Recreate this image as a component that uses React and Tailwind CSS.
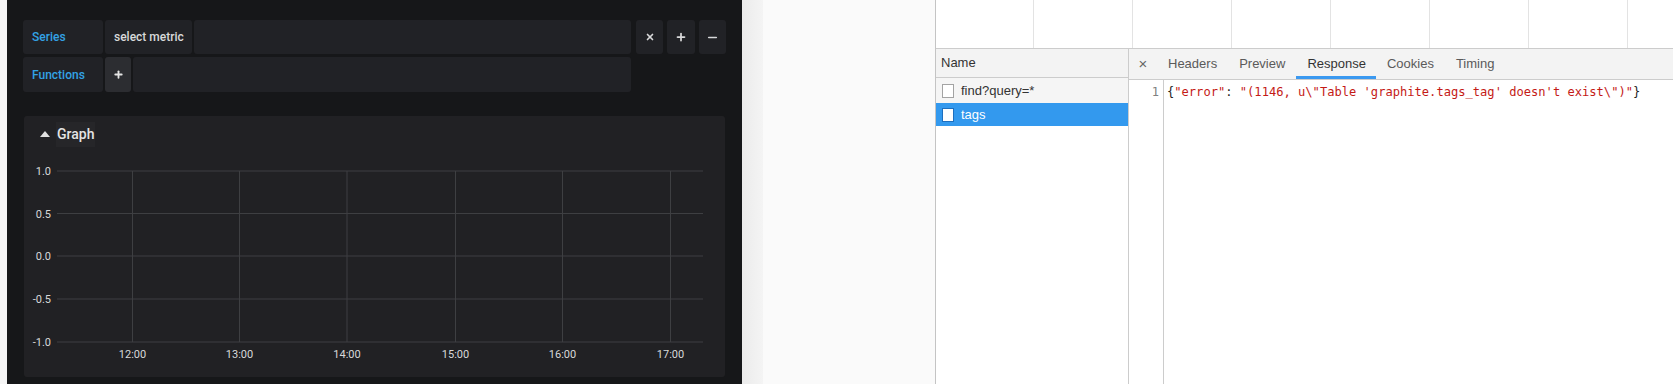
import React from 'react'
import { X, Plus, Minus } from 'lucide-react'

const yTicks = [
  { label: '1.0', y: 19 },
  { label: '0.5', y: 61.5 },
  { label: '0.0', y: 104 },
  { label: '-0.5', y: 147 },
  { label: '-1.0', y: 190 },
]

const xTicks = [
  { label: '12:00', x: 108.5 },
  { label: '13:00', x: 215.5 },
  { label: '14:00', x: 323 },
  { label: '15:00', x: 431.5 },
  { label: '16:00', x: 538.5 },
  { label: '17:00', x: 646.5 },
]

const GraphChart = () => (
  <svg width="701" height="225" className="block">
    {yTicks.map((t) => (
      <g key={t.label}>
        <line x1="33" x2="679" y1={t.y} y2={t.y} stroke="#3e3f42" strokeWidth="1" />
        <text x="27" y={t.y + 4} textAnchor="end" fontSize="11" fill="#d8d9da" fontFamily="Roboto, sans-serif">
          {t.label}
        </text>
      </g>
    ))}
    {xTicks.map((t) => (
      <g key={t.label}>
        <line x1={t.x} x2={t.x} y1="19" y2="190" stroke="#3e3f42" strokeWidth="1" />
        <text x={t.x} y="206" textAnchor="middle" fontSize="11" fill="#d8d9da" fontFamily="Roboto, sans-serif">
          {t.label}
        </text>
      </g>
    ))}
  </svg>
)

const FileIcon = ({ selected }) => (
  <span
    className={`inline-block w-[12px] h-[14px] border ${selected ? 'bg-white border-[#1d6fbf]' : 'bg-white border-[#a3a3a3]'}`}
  />
)

const Grafana = () => (
  <div className="w-[735px] h-full bg-[#161719] pt-[20px] pl-[16px] font-['Roboto',sans-serif]">
    {/* Query rows */}
    <div className="flex flex-col gap-[3px]">
      <div className="flex h-[34px]">
        <div className="w-[80px] bg-[#212226] rounded-[3px] flex items-center pl-[9px] text-[12px] font-medium text-[#33a2e5]">
          Series
        </div>
        <div className="ml-[2px] w-[87px] bg-[#212226] rounded-[3px] flex items-center pl-[9px] text-[12px] font-medium text-[#d8d9da]">
          select metric
        </div>
        <div className="ml-[2px] w-[437px] bg-[#212226] rounded-[3px]" />
        <div className="ml-[5px] w-[27px] bg-[#212226] rounded-[3px] flex items-center justify-center text-[#d8d9da]">
          <X size={10} strokeWidth={4} />
        </div>
        <div className="ml-[4px] w-[28px] bg-[#212226] rounded-[3px] flex items-center justify-center text-[#d8d9da]">
          <Plus size={12} strokeWidth={3.5} />
        </div>
        <div className="ml-[4px] w-[27px] bg-[#212226] rounded-[3px] flex items-center justify-center text-[#d8d9da]">
          <Minus size={13} strokeWidth={3} />
        </div>
      </div>
      <div className="flex h-[35px]">
        <div className="w-[80px] bg-[#212226] rounded-[3px] flex items-center pl-[9px] text-[12px] font-medium text-[#33a2e5]">
          Functions
        </div>
        <div className="ml-[2px] w-[26px] bg-[#2c2d31] rounded-[3px] flex items-center justify-center text-[#e4e4e4]">
          <Plus size={11} strokeWidth={4} />
        </div>
        <div className="ml-[2px] w-[498px] bg-[#212226] rounded-[3px]" />
      </div>
    </div>

    {/* Graph panel */}
    <div className="mt-[24px] ml-[1px] w-[701px] h-[261px] bg-[#212124] rounded-[3px]">
      <div className="h-[36px] flex items-center pl-[16px]">
        <span className="w-0 h-0 border-l-[5.5px] border-r-[5.5px] border-b-[6px] border-l-transparent border-r-transparent border-b-[#e0e0e0]" />
        <span className="ml-[6px] px-[1px] py-[2px] bg-[#262629] text-[14px] font-medium text-[#e4e4e4]">Graph</span>
      </div>
      <GraphChart />
    </div>
  </div>
)

const DevTools = () => (
  <div className="flex-1 h-full flex flex-col border-l border-[#c4c4c4] bg-white font-['Liberation_Sans',sans-serif]">
    {/* Waterfall strip */}
    <div className="h-[49px] flex border-b border-[#cccccc] overflow-hidden">
      <div className="w-[98px] shrink-0 border-r border-[#e3e3e3]" />
      {[0, 1, 2, 3, 4, 5].map((i) => (
        <div key={i} className="w-[99px] shrink-0 border-r border-[#e3e3e3]" />
      ))}
      <div className="flex-1" />
    </div>

    <div className="flex-1 flex">
      {/* Name column */}
      <div className="w-[193px] border-r border-[#cccccc] flex flex-col">
        <div className="h-[29px] bg-[#f3f3f3] border-b border-[#cccccc] flex items-center pl-[5px] text-[13px] text-[#333]">
          Name
        </div>
        <div className="h-[25px] bg-[#f5f5f5] flex items-center pl-[6px] gap-[7px] text-[13px] text-[#333]">
          <FileIcon />
          <span>find?query=*</span>
        </div>
        <div className="h-[23px] bg-[#3399ee] flex items-center pl-[6px] gap-[7px] text-[13px] text-white">
          <FileIcon selected />
          <span>tags</span>
        </div>
      </div>

      {/* Detail panel */}
      <div className="flex-1 flex flex-col">
        <div className="h-[31px] bg-[#f3f3f3] border-b border-[#cccccc] flex items-stretch text-[13px] text-[#5a5a5a]">
          <div className="w-[28px] flex items-center justify-center text-[15px] text-[#666]">×</div>
          <div className="px-[11px] flex items-center">Headers</div>
          <div className="px-[11px] flex items-center">Preview</div>
          <div className="pl-[11px] pr-[10px] flex items-center text-[#333] border-b-[3px] border-[#3b99f0] pt-[3px]">Response</div>
          <div className="px-[11px] flex items-center">Cookies</div>
          <div className="px-[11px] flex items-center">Timing</div>
        </div>
        <div className="flex-1 flex font-['DejaVu_Sans_Mono',monospace] text-[12.1px] leading-[15px]">
          <div className="w-[35px] border-r border-[#cccccc] text-right pr-[4px] pt-[5px] text-[#808080]">1</div>
          <div className="pl-[3px] pt-[5px] whitespace-pre text-[#222]">
            {'{'}
            <span className="text-[#c41a16]">"error"</span>
            {': '}
            <span className="text-[#c41a16]">{'"(1146, u\\"Table \'graphite.tags_tag\' doesn\'t exist\\")"'}</span>
            {'}'}
          </div>
        </div>
      </div>
    </div>
  </div>
)

export default function App() {
  return (
    <div className="w-[1673px] h-[384px] flex overflow-hidden bg-[#fafafa]">
      <div className="w-[7px] h-full bg-[#f5f5f5]" />
      <Grafana />
      <div className="w-[21px] h-full bg-gradient-to-r from-[#ebebeb] to-[#f4f4f4]" />
      <div className="w-[172px] h-full bg-[#fafafa]" />
      <DevTools />
    </div>
  )
}
